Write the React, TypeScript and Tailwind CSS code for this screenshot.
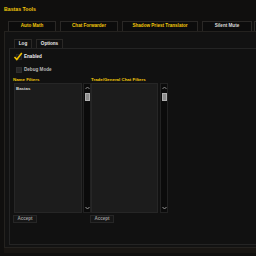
const gold = "text-[#f2c80a]";

const Tab = ({ label, w, active }: { label: string; w: string; active?: boolean }) => (
  <div
    className={`${w} h-[11px] shrink-0 flex items-center justify-center border border-[#2a2826] bg-[#0c0c0c] text-[4.6px] font-bold ${
      active ? "text-[#dcdcdc]" : gold
    }`}
  >
    {label}
  </div>
);

const SubTab = ({ label, w }: { label: string; w: string }) => (
  <div
    className={`${w} h-[9px] flex items-center justify-center border border-b-0 border-[#2a2826] bg-[#101010] text-[4.6px] font-bold text-[#e8e8e8]`}
  >
    {label}
  </div>
);

const ScrollBar = ({ w }: { w: string }) => (
  <div className={`${w} h-full flex flex-col items-center border border-[#222222] bg-[#0b0b0b]`}>
    <svg width="5" height="4" viewBox="0 0 5 4" className="mt-[2px]">
      <path d="M0.5 3 L2.5 1 L4.5 3" stroke="#8a8a8a" strokeWidth="1" fill="none" />
    </svg>
    <div className="mt-[3px] w-[5px] h-[8px] bg-[#8c8c8c] border border-[#b0b0b0]" />
    <div className="flex-1" />
    <svg width="5" height="4" viewBox="0 0 5 4" className="mb-[2px]">
      <path d="M0.5 1 L2.5 3 L4.5 1" stroke="#9a9a9a" strokeWidth="1" fill="none" />
    </svg>
  </div>
);

const Accept = () => (
  <div className="w-[24px] h-[8px] flex items-center justify-center border border-[#262626] bg-[#161616] text-[4.5px] font-bold text-[#9a9a9a]">
    Accept
  </div>
);

export default function App() {
  return (
    <div
      className="w-[256px] h-[256px] overflow-hidden bg-[#100f0e] flex flex-col"
      style={{ fontFamily: '"Liberation Sans", Arial, sans-serif' }}
    >
      {/* title */}
      <div className={`h-[21px] pl-[4px] pt-[6px] text-[5.2px] leading-[6px] font-bold ${gold}`}>
        Bastas Tools
      </div>

      {/* top tabs */}
      <div className="flex pl-[8px] h-[10px]">
        <Tab label="Auto Math" w="w-[48px]" />
        <div className="w-[4px] shrink-0" />
        <Tab label="Chat Forwarder" w="w-[58px]" />
        <div className="w-[4px] shrink-0" />
        <Tab label="Shadow Priest Translator" w="w-[76px]" />
        <div className="w-[4px] shrink-0" />
        <Tab label="Silent Mute" w="w-[50px]" active />
        <div className="w-[2px] shrink-0" />
        <Tab label="" w="w-[20px]" />
      </div>

      {/* outer panel */}
      <div className="ml-[4px] h-[217px] border-l border-t border-b border-[#24221f] bg-[#121212] flex flex-col">
        <div className="flex pl-[9px] pt-[7px] gap-[4px]">
          <SubTab label="Log" w="w-[18px]" />
          <SubTab label="Options" w="w-[27px]" />
        </div>

        {/* inner panel */}
        <div className="ml-[4px] h-[197px] border-l border-t border-b border-[#242424] bg-[#111111] flex flex-col pl-[3px]">
          <div className="relative mt-[5px] ml-[3px] h-[6px] flex items-center gap-[2px]">
            <div className="w-[6px] h-[6px] bg-[#1a1a1a] border border-[#262626]" />
            <svg width="10" height="9" viewBox="0 0 10 9" className="absolute left-[-3px] top-[-2px]">
              <path d="M1.5 5 L3.8 7.5 L8.8 1" stroke="#f0c000" strokeWidth="1.6" fill="none" />
            </svg>
            <span className="text-[4.6px] font-bold text-[#eeeeee]">Enabled</span>
          </div>
          <div className="mt-[7px] ml-[3px] h-[6px] flex items-center gap-[2px]">
            <div className="w-[6px] h-[6px] bg-[#262626] border border-[#2e2e2e]" />
            <span className="text-[4.6px] font-bold text-[#b8b8b8]">Debug Mode</span>
          </div>

          <div className={`mt-[4px] h-[6px] flex items-center text-[4.4px] font-bold ${gold}`}>
            <span className="w-[78px]">Name Filters</span>
            <span>Trade/General Chat Filters</span>
          </div>

          <div className="ml-[1px] h-[130px] flex">
            <div className="w-[68px] h-full bg-[#1c1c1c] border border-[#262626] pl-[1px] pt-[2px] text-[4.4px] leading-[5px] font-bold text-[#d4d4d4]">
              Bastas
            </div>
            <div className="w-[1px]" />
            <ScrollBar w="w-[8px]" />
            <div className="w-[67px] h-full bg-[#1c1c1c] border border-[#262626]" />
            <div className="w-[2px]" />
            <ScrollBar w="w-[8px]" />
          </div>

          <div className="mt-[2px] flex">
            <Accept />
            <div className="w-[53px]" />
            <Accept />
          </div>
        </div>
      </div>
      <div className="ml-[4px] h-[5px] bg-[#181512]" />
    </div>
  );
}
